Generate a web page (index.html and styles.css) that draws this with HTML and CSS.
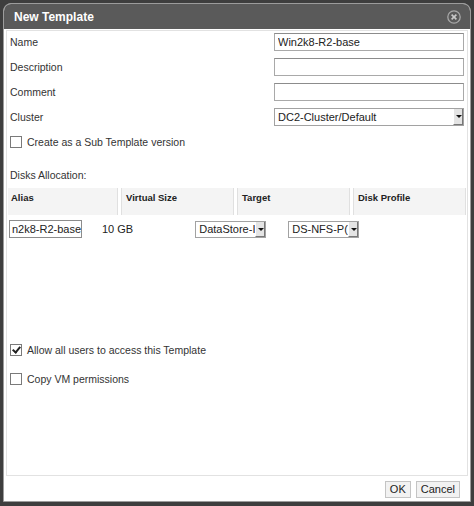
FILE: index.html
```html
<!DOCTYPE html>
<html lang="en">
<head>
    <meta charset="UTF-8">
    <title>New Template</title>
    <link rel="stylesheet" href="styles.css">
</head>
<body>

    <div class="dialog">
        <div class="dialog-header">
            <span class="dialog-title">New Template</span>
            <span class="close-button">
                <svg width="14" height="14" viewBox="0 0 14 14">
                    <circle cx="7" cy="7" r="6.2" fill="none" stroke="#a8a8a8" stroke-width="1.3"/>
                    <path d="M4.6 4.6 L9.4 9.4 M9.4 4.6 L4.6 9.4" stroke="#c8c8c8" stroke-width="1.6"/>
                </svg>
            </span>
        </div>

        <div class="dialog-content">
            <div class="form">
                <div class="form-row">
                    <label>Name</label>
                    <input type="text" class="input-field" value="Win2k8-R2-base">
                </div>
                <div class="form-row">
                    <label>Description</label>
                    <input type="text" class="input-field">
                </div>
                <div class="form-row">
                    <label>Comment</label>
                    <input type="text" class="input-field">
                </div>
                <div class="form-row">
                    <label>Cluster</label>
                    <div class="select-box wide">
                        <span class="select-text">DC2-Cluster/Default</span>
                        <span class="select-arrow"></span>
                    </div>
                </div>
                <div class="form-row">
                    <label class="check-label"><span class="checkbox"></span>Create as a Sub Template version</label>
                </div>
            </div>

            <div class="section-title">Disks Allocation:</div>

            <div class="disk-header">
                <div class="disk-col first">Alias</div>
                <div class="disk-col">Virtual Size</div>
                <div class="disk-col">Target</div>
                <div class="disk-col">Disk Profile</div>
            </div>

            <div class="disk-row">
                <div class="alias-input">n2k8-R2-base<span class="caret"></span></div>
                <span class="disk-size">10 GB</span>
                <div class="select-box small target">
                    <span class="select-text">DataStore-I</span>
                    <span class="select-arrow"></span>
                </div>
                <div class="select-box small profile">
                    <span class="select-text">DS-NFS-P(</span>
                    <span class="select-arrow"></span>
                </div>
            </div>

            <div class="options">
                <label class="check-label"><span class="checkbox checked"></span>Allow all users to access this Template</label>
                <label class="check-label"><span class="checkbox"></span>Copy VM permissions</label>
            </div>
        </div>

        <div class="dialog-footer">
            <button class="dialog-button">OK</button>
            <button class="dialog-button">Cancel</button>
        </div>
    </div>

</body>
</html>
```

FILE: styles.css
```css
/* Fundo escuro atras do dialogo */
body {
    margin: 0;
    padding: 3px 3px 4px 3px;
    background-color: #3e3e3e;
    font-family: "Liberation Sans", Arial, sans-serif;
    color: #333;
    height: 506px;
    box-sizing: border-box;
    overflow: hidden;
}

.dialog {
    height: 499px;
    background-color: #fff;
    border: 1px solid #9c9c9c;
    border-radius: 8px 8px 0 0;
    box-sizing: border-box;
    display: flex;
    flex-direction: column;
    overflow: hidden;
}

/* Barra de titulo */
.dialog-header {
    height: 25px;
    flex: none;
    background-color: #5a5a5a;
    display: flex;
    align-items: center;
    justify-content: space-between;
    padding: 0 10px 0 10px;
}

.dialog-title {
    color: #fff;
    font-weight: bold;
    font-size: 12px;
}

.close-button {
    display: flex;
    margin-right: -1px;
}

/* Painel com borda clara */
.dialog-content {
    height: 446px;
    flex: none;
    margin: 1px 2px 0 2px;
    border: 1px solid #e2e2e2;
    box-sizing: border-box;
}

.form {
    margin-top: -2px;
}

.form-row {
    height: 25px;
    display: flex;
    align-items: center;
    justify-content: space-between;
    padding: 0 3px;
    font-size: 10.5px;
}

.input-field {
    width: 190px;
    height: 18px;
    box-sizing: border-box;
    border: 1px solid #a9a9a9;
    border-top-color: #8c8c8c;
    padding: 0 3px;
    font-family: "Liberation Sans", Arial, sans-serif;
    font-size: 11px;
    color: #222;
    margin: 0;
}

/* Caixa de selecao desenhada a mao */
.select-box {
    height: 18px;
    box-sizing: border-box;
    border: 1px solid #a2a2a2;
    display: flex;
    align-items: center;
    background-color: #fff;
    font-size: 11px;
    color: #222;
}

.select-box.wide {
    width: 190px;
}

.select-box.small {
    width: 71px;
    height: 17px;
}

.select-text {
    flex: 1;
    padding-left: 3px;
    white-space: nowrap;
    overflow: hidden;
}

.select-arrow {
    width: 10px;
    height: 100%;
    box-sizing: border-box;
    background-color: #e4e4e4;
    border-left: 1px solid #fff;
    border-right: 1px solid #777;
    border-bottom: 1px solid #777;
    position: relative;
}

.select-arrow::after {
    content: "";
    position: absolute;
    left: 2px;
    top: 6px;
    border-left: 3px solid transparent;
    border-right: 3px solid transparent;
    border-top: 3px solid #111;
}

/* Checkbox simples */
.check-label {
    display: flex;
    align-items: center;
    font-size: 10.5px;
}

.checkbox {
    width: 10px;
    height: 10px;
    border: 1px solid #7a7a7a;
    margin-right: 5px;
    position: relative;
    background-color: #fff;
}

.checkbox.checked::after {
    content: "";
    position: absolute;
    left: 3px;
    top: 0px;
    width: 3px;
    height: 6px;
    border-right: 2px solid #222;
    border-bottom: 2px solid #222;
    transform: rotate(40deg);
}

.section-title {
    font-size: 10.5px;
    margin: 14px 0 0 3px;
    line-height: 14px;
}

/* Cabecalho da tabela de discos */
.disk-header {
    display: flex;
    gap: 3px;
    margin: 6px 0 0 1px;
    height: 27px;
}

.disk-col {
    width: 113px;
    box-sizing: border-box;
    background-color: #f4f4f4;
    border-left: 1px solid #e0e0e0;
    border-right: 1px solid #e0e0e0;
    font-size: 9.5px;
    font-weight: bold;
    color: #222;
    padding: 4px 0 0 4px;
}

.disk-col.first {
    width: 110px;
    border-left: none;
    padding-left: 3px;
}

.disk-row {
    display: flex;
    align-items: center;
    margin: 5px 0 0 2px;
    height: 18px;
    font-size: 11px;
}

.alias-input {
    width: 73px;
    height: 18px;
    box-sizing: border-box;
    border: 1px solid #8c8c8c;
    padding: 0 2px;
    line-height: 16px;
    color: #222;
    white-space: nowrap;
    overflow: hidden;
}

.caret {
    display: inline-block;
    width: 1px;
    height: 13px;
    background-color: #000;
    vertical-align: middle;
}

.disk-size {
    margin-left: 20px;
    color: #222;
}

.target {
    margin-left: 62px;
}

.profile {
    margin-left: 22px;
}

.options {
    margin: 106px 0 0 3px;
    display: flex;
    flex-direction: column;
    gap: 17px;
}

/* Rodape com botoes */
.dialog-footer {
    flex: 1;
    display: flex;
    justify-content: flex-end;
    align-items: center;
    gap: 5px;
    padding-right: 10px;
}

.dialog-button {
    height: 17px;
    padding: 0 4px;
    background-color: #f2f2f2;
    border: 1px solid #c4c4c4;
    font-family: "Liberation Sans", Arial, sans-serif;
    font-size: 11px;
    color: #222;
    margin-top: 1px;
}
```
